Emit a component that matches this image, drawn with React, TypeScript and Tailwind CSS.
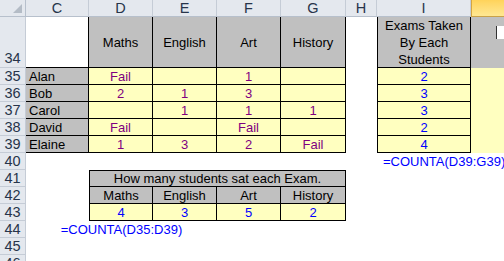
import React from 'react';

const YEL = 'bg-[#ffffc0]';
const GRY = 'bg-[#c0c0c0]';

const COLS = [
  { id: 'C', w: 'w-[63px]' },
  { id: 'D', w: 'w-[64px]' },
  { id: 'E', w: 'w-[64px]' },
  { id: 'F', w: 'w-[64px]' },
  { id: 'G', w: 'w-[65px]' },
  { id: 'H', w: 'w-[31px]' },
  { id: 'I', w: 'w-[94px]' },
  { id: 'J', w: 'w-[33px]' },
];

const students = [
  { n: 35, name: 'Alan', v: ['Fail', '', '1', ''], t: '2' },
  { n: 36, name: 'Bob', v: ['2', '1', '3', ''], t: '3' },
  { n: 37, name: 'Carol', v: ['', '1', '1', '1'], t: '3' },
  { n: 38, name: 'David', v: ['Fail', '', 'Fail', ''], t: '2' },
  { n: 39, name: 'Elaine', v: ['1', '3', '2', 'Fail'], t: '4' },
];

const subjects = ['Maths', 'English', 'Art', 'History'];
const counts = ['4', '3', '5', '2'];
const subjW = ['w-[64px]', 'w-[64px]', 'w-[64px]', 'w-[65px]'];

const RowHead = ({ n, tall }: { n: number; tall?: boolean }) => (
  <div
    className={`w-[26px] shrink-0 bg-[#e4e8ee] border-b border-r border-[#c5ccd6] text-[#27344a] text-[14.5px] flex justify-center ${
      tall ? 'h-[51px] items-end' : 'h-[17px] items-center'
    }`}
  >
    {n}
  </div>
);

const Row = ({ children }: { children: React.ReactNode }) => <div className="flex">{children}</div>;

export default function App() {
  return (
    <div className="w-[504px] h-[261px] overflow-hidden bg-white font-['Liberation_Sans',Arial,sans-serif] text-[13px] leading-[17px] text-black">
      {/* column headers */}
      <div className="flex h-[17px]">
        <div className="w-[26px] shrink-0 bg-[#e4e8ee] border-r border-b border-[#b7c0cc] relative">
          <div className="absolute right-[3px] bottom-[3px] w-0 h-0 border-l-[9px] border-l-transparent border-b-[9px] border-b-[#b4bcc6]" />
        </div>
        {COLS.map((c) =>
          c.id === 'J' ? (
            <div
              key={c.id}
              className={`${c.w} shrink-0 bg-gradient-to-b from-[#ffd35a] to-[#ffe892] border-b border-[#c9a24a] border-l border-l-[#d6a640]`}
            />
          ) : (
            <div
              key={c.id}
              className={`${c.w} shrink-0 bg-[#e4e8ee] border-r border-b border-[#c5ccd6] border-b-[#b7c0cc] text-[#27344a] text-[14.5px] flex items-center justify-center`}
            >
              {c.id}
            </div>
          )
        )}
      </div>

      {/* row 34 */}
      <Row>
        <RowHead n={34} tall />
        <div className="w-[63px] h-[51px] shrink-0 bg-white border-r border-b border-black" />
        {subjects.map((s, i) => (
          <div
            key={s}
            className={`${subjW[i]} h-[51px] shrink-0 ${GRY} border-r border-b border-black flex items-center justify-center`}
          >
            {s}
          </div>
        ))}
        <div className="w-[31px] h-[51px] shrink-0" />
        <div className={`w-[94px] h-[51px] shrink-0 ${GRY} border-l border-r border-b border-black flex flex-col items-center justify-center text-center`}>
          <span>Exams Taken</span>
          <span>By Each</span>
          <span>Students</span>
        </div>
        <div className={`w-[33px] h-[51px] shrink-0 ${GRY} flex items-start`}>
          <div className="ml-[25px] mt-[9px] w-[8px] h-[13px] bg-white border-l border-[#333]" />
        </div>
      </Row>

      {/* rows 35-39 */}
      {students.map((s) => (
        <Row key={s.n}>
          <RowHead n={s.n} />
          <div className={`w-[63px] h-[17px] shrink-0 ${GRY} border-r border-b border-black pl-[3px] flex items-center`}>
            {s.name}
          </div>
          {s.v.map((v, i) => (
            <div
              key={i}
              className={`${subjW[i]} h-[17px] shrink-0 ${YEL} border-r border-b border-black text-[#800080] flex items-center justify-center`}
            >
              {v}
            </div>
          ))}
          <div className="w-[31px] h-[17px] shrink-0" />
          <div className={`w-[94px] h-[17px] shrink-0 ${YEL} border-l border-r border-b border-black text-[#0000ff] flex items-center justify-center`}>
            {s.t}
          </div>
          <div className={`w-[33px] h-[17px] shrink-0 ${YEL}`} />
        </Row>
      ))}

      {/* row 40 */}
      <Row>
        <RowHead n={40} />
        <div className="w-[351px] shrink-0" />
        <div className="flex-1 h-[17px] pl-[6px] text-[#0000ff] whitespace-nowrap flex items-center">=COUNTA(D39:G39)</div>
      </Row>

      {/* row 41 */}
      <Row>
        <RowHead n={41} />
        <div className="w-[63px] shrink-0" />
        <div className={`w-[257px] h-[17px] shrink-0 ${GRY} border border-black flex items-center justify-center`}>
          How many students sat each Exam.
        </div>
      </Row>

      {/* row 42 */}
      <Row>
        <RowHead n={42} />
        <div className="w-[63px] shrink-0" />
        {subjects.map((s, i) => (
          <div
            key={s}
            className={`${subjW[i]} h-[17px] shrink-0 ${GRY} border-r border-b border-black flex items-center justify-center ${
              i === 0 ? 'border-l' : ''
            }`}
          >
            {s}
          </div>
        ))}
      </Row>

      {/* row 43 */}
      <Row>
        <RowHead n={43} />
        <div className="w-[63px] shrink-0" />
        {counts.map((c, i) => (
          <div
            key={i}
            className={`${subjW[i]} h-[17px] shrink-0 ${YEL} border-r border-b border-black text-[#0000ff] flex items-center justify-center ${
              i === 0 ? 'border-l' : ''
            }`}
          >
            {c}
          </div>
        ))}
      </Row>

      {/* row 44 */}
      <Row>
        <RowHead n={44} />
        <div className="w-[191px] h-[17px] shrink-0 text-[#0000ff] whitespace-nowrap flex items-center justify-center">
          =COUNTA(D35:D39)
        </div>
      </Row>

      <Row>
        <RowHead n={45} />
      </Row>
      <Row>
        <RowHead n={46} />
      </Row>
    </div>
  );
}
